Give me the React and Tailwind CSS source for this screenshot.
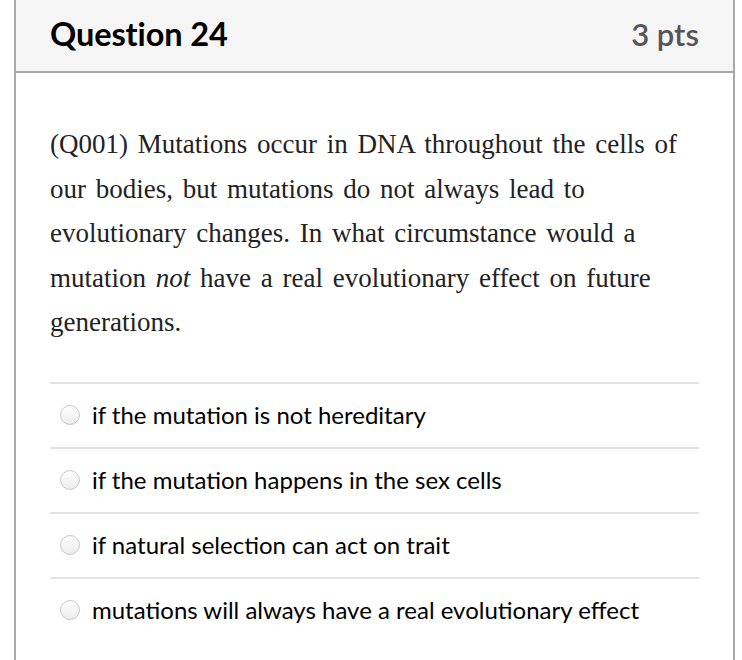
const ANSWERS = [
  'if the mutation is not hereditary',
  'if the mutation happens in the sex cells',
  'if natural selection can act on trait',
  'mutations will always have a real evolutionary effect',
]

export default function App() {
  return (
    <div className="w-[742px] h-[660px] overflow-hidden bg-white">
      <div className="ml-[14px] w-[721px] h-[700px] border-x-2 border-[#a9a9a9]">
        <div className="h-[73px] bg-[#f5f5f5] border-b-2 border-[#a9a9a9] flex items-center justify-between pl-[34px] pr-[34px] pb-[2px]">
          <h2 className="text-[32.5px] font-bold text-black font-['Lato',sans-serif] tracking-[-0.1px]">Question 24</h2>
          <span className="text-[31px] font-semibold text-[#555] font-['Lato',sans-serif]">3 pts</span>
        </div>
        <div className="px-[34px] pt-[49px]">
          <p className="font-['Liberation_Serif',serif] text-[27px] leading-[44.5px] text-[#222] [word-spacing:3px]">
            (Q001) Mutations occur in DNA throughout the cells of our bodies, but mutations do not always lead to evolutionary changes. In what circumstance would a mutation <i>not</i> have a real evolutionary effect on future generations.
          </p>
          <div className="mt-[37px]">
            {ANSWERS.map((a) => (
              <div key={a} className="border-t-2 border-[#e2e2e2] h-[65px] flex items-center gap-[12px] pl-[10px]">
                <span className="w-[20px] h-[20px] rounded-full border border-[#c8c8c8] bg-gradient-to-b from-white to-[#ececec] shrink-0" />
                <span className="font-['Lato',sans-serif] text-[24px] text-black">{a}</span>
              </div>
            ))}
          </div>
        </div>
      </div>
    </div>
  )
}
